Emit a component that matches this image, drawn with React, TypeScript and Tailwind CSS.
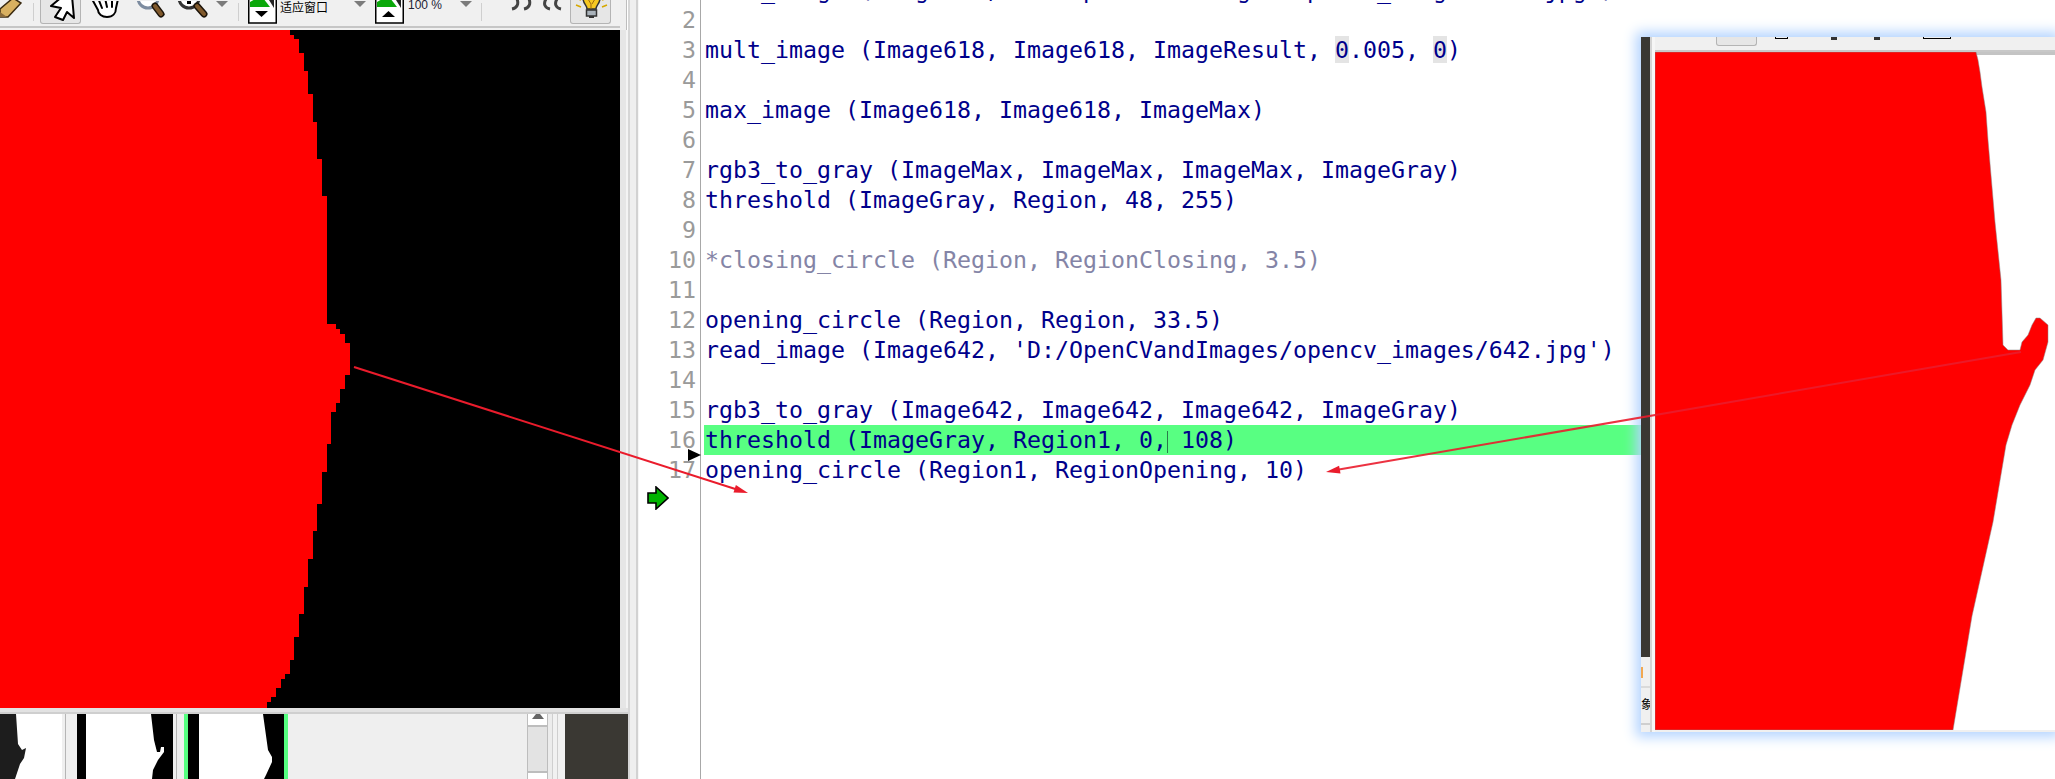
const codeLines: { n: number; text?: React.ReactNode; comment?: boolean; active?: boolean }[] = [
  { n: 1, text: "read_image (Image618, 'D:/OpenCVandImages/opencv_images/618.jpg')" },
  { n: 2 },
  {
    n: 3,
    text: (
      <>
        mult_image (Image618, Image618, ImageResult, <span className="bg-[#e4e4e4]">0</span>.005, <span className="bg-[#e4e4e4]">0</span>)
      </>
    ),
  },
  { n: 4 },
  { n: 5, text: "max_image (Image618, Image618, ImageMax)" },
  { n: 6 },
  { n: 7, text: "rgb3_to_gray (ImageMax, ImageMax, ImageMax, ImageGray)" },
  { n: 8, text: "threshold (ImageGray, Region, 48, 255)" },
  { n: 9 },
  { n: 10, text: "*closing_circle (Region, RegionClosing, 3.5)", comment: true },
  { n: 11 },
  { n: 12, text: "opening_circle (Region, Region, 33.5)" },
  { n: 13, text: "read_image (Image642, 'D:/OpenCVandImages/opencv_images/642.jpg')" },
  { n: 14 },
  { n: 15, text: "rgb3_to_gray (Image642, Image642, Image642, ImageGray)" },
  {
    n: 16,
    text: (
      <>
        threshold (ImageGray, Region1, 0,<span className="inline-block w-px h-[22px] -mr-px align-middle bg-[#2a7a4a]" /> 108)
      </>
    ),
    active: true,
  },
  { n: 17, text: "opening_circle (Region1, RegionOpening, 10)" },
];

type Pt = [number, number];

// walks an outline row by row so the edge comes out blocky like a zoomed image
const steppedPath = (pts: Pt[], block: number) => {
  const xAt = (y: number) => {
    for (let i = 0; i < pts.length - 1; i++) {
      const [x1, y1] = pts[i];
      const [x2, y2] = pts[i + 1];
      if (y >= y1 && y <= y2) return x1 + ((x2 - x1) * (y - y1)) / (y2 - y1 || 1);
    }
    return pts[pts.length - 1][0];
  };
  const top = pts[0][1];
  const bottom = pts[pts.length - 1][1];
  let d = `M0 ${top}`;
  for (let y = top; y < bottom; y += block) {
    const x = Math.round(xAt(y + block / 2) / block) * block;
    d += ` H${x} V${Math.min(y + block, bottom)}`;
  }
  return d + " H0 Z";
};

const leftOutline: Pt[] = [
  [286, 0], [296, 8], [303, 25], [312, 70], [325, 170], [328, 210], [328, 293], [335, 296], [341, 300], [346, 310],
  [349, 318], [349, 342], [346, 350], [340, 368], [334, 380], [308, 547], [291, 638], [277, 660], [265, 678],
];

const Caret = () => (
  <svg width="12" height="6" viewBox="0 0 12 6" className="shrink-0">
    <path d="M0 0H12L6 6Z" fill="#7b7b7b" />
  </svg>
);

const Sep = () => <div className="w-px h-[18px] bg-[#cfcfcf] shrink-0 mb-[3px]" />;

const PressedButton = ({ children }: { children: React.ReactNode }) => (
  <div className="w-[41px] h-[24px] shrink-0 rounded-b-[3px] border border-t-0 border-[#b4b4b4] bg-[#e6e6e6] overflow-hidden">
    {children}
  </div>
);

const FitIcon = ({ down }: { down?: boolean }) => (
  <svg width="29" height="24" viewBox="0 0 29 24" className="shrink-0">
    <rect x="0.75" y="-4" width="27.5" height="27" fill="#fff" stroke="#000" strokeWidth="1.5" />
    <path d="M2 7V2L9 -2H15L22 7Z" fill="#0aa80a" />
    <path d="M21 0H26V8Z" fill="#222" />
    <path d={down ? "M7 11H20L13.5 17Z" : "M7 17H20L13.5 11Z"} fill="#000" />
  </svg>
);

const Toolbar = () => (
  <div className="h-[30px] shrink-0 bg-[#f0f0f0] overflow-hidden flex">
    <div className="w-[620px] h-[28px] border-b-2 border-[#c6c6c6] flex items-end pb-[2px] overflow-hidden">
      <svg width="22" height="18" viewBox="0 0 22 18" className="shrink-0 mb-[6px]">
        <path d="M0 9L13 -2L21 3L8 17H0Z" fill="#d8b060" stroke="#3a2a10" strokeWidth="1.5" />
        <path d="M0 12L7 17H0Z" fill="#8a6a3a" />
      </svg>
      <div className="w-[11px] shrink-0" />
      <Sep />
      <div className="w-[6px] shrink-0" />
      <PressedButton>
        <svg width="41" height="24" viewBox="0 0 41 24">
          <path d="M22 -4L10 6L20 8L14 17L22 20L26 12L33 18L31 -4Z" fill="#fff" stroke="#000" strokeWidth="2" strokeLinejoin="round" />
        </svg>
      </PressedButton>
      <svg width="30" height="18" viewBox="0 0 30 18" className="ml-[8px] shrink-0 mb-[5px]">
        <path d="M3 -2L9 9C9 13 13 16 18 16C24 16 27 12 27 7L29 -2M9 -3L13 7M16 -3L18 6M23 -3L23 6" fill="#fff" stroke="#000" strokeWidth="2" strokeLinecap="round" />
      </svg>
      <svg width="32" height="18" viewBox="0 0 32 18" className="ml-[14px] shrink-0 mb-[5px]">
        <circle cx="15" cy="-3" r="10" fill="#fff" stroke="#7d8ca0" strokeWidth="3" />
        <path d="M22 5L28 13" stroke="#1c140a" strokeWidth="7" strokeLinecap="round" />
        <path d="M22 5L28 13" stroke="#80592c" strokeWidth="4" strokeLinecap="round" />
      </svg>
      <svg width="32" height="18" viewBox="0 0 32 18" className="ml-[11px] shrink-0 mb-[5px]">
        <circle cx="13" cy="-3" r="10" fill="#fff" stroke="#333" strokeWidth="3" />
        <path d="M13 -2V3" stroke="#000" strokeWidth="4" />
        <path d="M21 5L28 13" stroke="#1c140a" strokeWidth="7" strokeLinecap="round" />
        <path d="M21 5L28 13" stroke="#80592c" strokeWidth="4" strokeLinecap="round" />
      </svg>
      <div className="ml-[8px] mb-[17px] shrink-0"><Caret /></div>
      <div className="w-[10px] shrink-0" />
      <Sep />
      <div className="w-[9px] shrink-0" />
      <FitIcon down />
      <span className="ml-[3px] mb-[11px] w-[74px] shrink-0 text-[12px] leading-[12px] text-black font-['Noto_Sans_CJK_SC',sans-serif]">适应窗口</span>
      <div className="mb-[17px] shrink-0"><Caret /></div>
      <div className="w-[9px] shrink-0" />
      <FitIcon />
      <span className="ml-[4px] mb-[13px] w-[52px] shrink-0 text-[12px] leading-[12px] text-[#223] font-['Liberation_Sans',sans-serif]">100 %</span>
      <div className="mb-[17px] shrink-0"><Caret /></div>
      <div className="w-[9px] shrink-0" />
      <Sep />
      <svg width="54" height="14" viewBox="0 0 54 14" className="ml-[29px] shrink-0 mb-[12px]">
        <path d="M1 11C6 10 8 6 6 1M13 11C18 10 20 6 18 1M35 1C32 6 34 10 39 11M46 1C43 6 45 10 50 11" fill="none" stroke="#444" strokeWidth="3" />
      </svg>
      <div className="w-[5px] shrink-0" />
      <PressedButton>
        <svg width="41" height="24" viewBox="0 0 41 24">
          <path d="M12 -2C12 4 16 5 16 9H25C25 5 29 4 29 -2Z" fill="#f6c820" stroke="#333" strokeWidth="1.5" />
          <path d="M17 -1L20 4V9M24 -1L21 4" fill="none" stroke="#a06a10" strokeWidth="1" />
          <rect x="15.5" y="10" width="10" height="6" fill="#a9b2ba" stroke="#333" strokeWidth="1.5" />
          <path d="M18 17H23" stroke="#333" strokeWidth="2" />
          <path d="M5 5L10 7M36 5L31 7M7 -1L10 0M34 -1L31 0" stroke="#d6a800" strokeWidth="1.5" />
        </svg>
      </PressedButton>
    </div>
    <div className="w-[6px] bg-[#efefef] shrink-0" />
    <div className="w-px bg-[#bdbdbd] shrink-0" />
    <div className="w-px bg-white shrink-0" />
  </div>
);

const Thumbs = () => (
  <div className="h-[65px] shrink-0 flex bg-[#efefef]">
    <svg width="65" height="65" viewBox="0 0 65 65" className="shrink-0">
      <rect width="62" height="65" fill="#fff" />
      <path d="M0 0H16L18 30L22 36L26 34L24 44L20 50L15 65H0Z" fill="#1d1d1d" />
    </svg>
    <div className="w-px bg-[#b5b5b5] shrink-0" />
    <svg width="110" height="65" viewBox="0 0 110 65" className="shrink-0">
      <rect x="11" width="96" height="65" fill="#000" />
      <path d="M20 0H85L88 26L91 38L94 38L95 33L98 33L98 38L92 46L87 56L86 65H20Z" fill="#fff" />
    </svg>
    <div className="w-px bg-[#b5b5b5] shrink-0" />
    <svg width="350" height="65" viewBox="0 0 350 65" className="shrink-0">
      <rect x="7" width="104" height="65" fill="#000" />
      <rect x="7" width="4" height="65" fill="#55ff80" />
      <rect x="107" width="4" height="65" fill="#55ff80" />
      <path d="M22 0H86L91 36L95 43L95 48L89 61L87 65H22Z" fill="#fff" />
    </svg>
    <div className="w-[21px] shrink-0 border-x border-[#bdbdbd] flex flex-col bg-white">
      <div className="h-[11px] shrink-0 flex justify-center">
        <svg width="12" height="5" viewBox="0 0 12 5"><path d="M0 5L4 0H8L12 5Z" fill="#666" /></svg>
      </div>
      <div className="h-[48px] shrink-0 bg-[#e3e3e3] border-y-2 border-[#bdbdbd]" />
    </div>
    <div className="w-[17px] shrink-0 flex">
      <div className="w-[4px] bg-[#ececec]" />
      <div className="w-[1px] bg-[#cfcfcf]" />
      <div className="w-[4px] bg-[#f1f1f1]" />
      <div className="w-[1px] bg-[#cfcfcf]" />
      <div className="w-[7px] bg-[#f1f1f1]" />
    </div>
    <div className="w-[63px] shrink-0 bg-[#3a3833]" />
  </div>
);

const LeftPanel = () => (
  <div className="w-[628px] shrink-0 flex flex-col">
    <Toolbar />
    <div className="h-[678px] shrink-0 flex">
      <svg width="620" height="678" viewBox="0 0 620 678" shapeRendering="crispEdges" className="shrink-0">
        <rect width="620" height="678" fill="#000" />
        <path d={steppedPath(leftOutline, 4.6)} fill="#f00" />
      </svg>
      <div className="w-[6px] bg-[#e6e6e6] shrink-0" />
      <div className="w-[2px] bg-[#f4f4f4] shrink-0" />
    </div>
    <div className="h-[6px] shrink-0 bg-[#e2e2e2] border-b-2 border-[#cfcfcf]" />
    <Thumbs />
  </div>
);

const Splitter = () => (
  <div className="w-[11px] shrink-0 flex">
    <div className="w-[2px] bg-[#d6d6d6]" />
    <div className="w-[6px] bg-[#efefef]" />
    <div className="w-[2px] bg-[#d2d2d2]" />
    <div className="w-[1px] bg-[#f6f6f6]" />
  </div>
);

const Editor = () => (
  <div className="flex-1 min-w-0 bg-white relative overflow-hidden font-['DejaVu_Sans_Mono',monospace] text-[23.25px] leading-[30px]">
    <div className="-mt-[25px] flex flex-col">
      {codeLines.map((line) => (
        <div key={line.n} className="h-[30px] flex whitespace-pre">
          <div className="w-[57px] shrink-0 text-right text-[#9a9a9a]">{line.n}</div>
          <div className="w-[5px] shrink-0 border-r border-[#a8a8a8]" />
          <div className={`flex-1 pl-px ml-[3px] ${line.active ? "bg-[#58ff82]" : ""} ${line.comment ? "text-[#8484a6]" : "text-[#00008b]"}`}>
            {line.text}
          </div>
        </div>
      ))}
      <div className="w-[62px] h-[400px] border-r border-[#a8a8a8]" />
    </div>
    <svg width="13" height="12" viewBox="0 0 13 12" className="absolute left-[49px] top-[449px]">
      <path d="M0 0L13 6L0 12Z" fill="#000" />
    </svg>
    <svg width="22" height="24" viewBox="0 0 22 24" className="absolute left-[8px] top-[486px]">
      <path d="M1 7H9V1L21 12L9 23V17H1Z" fill="#00b400" stroke="#000" strokeWidth="1.6" />
    </svg>
  </div>
);

const windowOutline =
  "M0 0H321L323 8L325 20L327 35L331 60L333 88L340 170L346 228L348 293L353 298L365 298L367 290L373 283L377 273L381 266L385 266L393 273L393 290L388 308L380 318L375 333L365 353L357 373L351 393L338 470L317 564L298 678H0Z";

const FloatingWindow = () => (
  <div className="absolute left-[1641px] top-[37px] w-[414px] h-[695px] flex bg-[#f0f0f0] shadow-[0_0_12px_5px_#b4d4ff]">
    <div className="w-[9px] shrink-0 flex flex-col overflow-hidden">
      <div className="h-[620px] shrink-0 bg-[#3a3833]" />
      <div className="h-[31px] shrink-0 border-b-2 border-[#dadada] bg-[#f0f0f0]">
        <div className="w-[2px] h-[11px] mt-[10px] bg-[#f2a850]" />
      </div>
      <div className="h-[37px] shrink-0 border-b-2 border-[#cfcfcf] overflow-hidden pt-[10px] text-[12px] leading-[12px] text-black font-['Noto_Sans_CJK_SC',sans-serif]">象</div>
    </div>
    <div className="w-[2px] shrink-0 bg-[#d4d4d4]" />
    <div className="w-[3px] shrink-0 bg-[#f6f6f6]" />
    <div className="flex-1 min-w-0 flex flex-col">
      <div className="h-[15px] shrink-0 border-b-2 border-[#c8c8c8] flex items-start overflow-hidden">
        <div className="ml-[61px] w-[41px] h-[9px] rounded-b-[3px] border border-t-0 border-[#b4b4b4] bg-[#e6e6e6]" />
        <div className="ml-[18px] w-[13px] h-[2px] border border-t-0 border-black" />
        <div className="ml-[43px] w-[6px] h-[3px] bg-[#333]" />
        <div className="ml-[37px] w-[6px] h-[3px] bg-[#333]" />
        <div className="ml-[43px] w-[28px] h-[2px] border border-t-0 border-black" />
      </div>
      <svg width="400" height="678" viewBox="0 0 400 678" className="shrink-0 bg-white">
        <rect x="321" width="79" height="3" fill="#c4c4c4" />
        <path d={windowOutline} fill="#f00" stroke="#888" strokeOpacity="0.5" strokeWidth="1" />
      </svg>
    </div>
  </div>
);

const Annotations = () => (
  <svg width="2055" height="779" viewBox="0 0 2055 779" className="absolute left-0 top-0 pointer-events-none">
    <path d="M354 367L740 490.5" stroke="#ea1c2c" strokeWidth="2" />
    <path d="M748 493L733.5 492.5L735.9 484.9Z" fill="#ea1c2c" />
    <path d="M2021 352L1336 470" stroke="#ea1c2c" strokeWidth="2" strokeOpacity="0.9" />
    <path d="M1326 472L1340.5 473.5L1339.1 465.7Z" fill="#ea1c2c" />
  </svg>
);

const App = () => {
  return (
    <div className="relative w-[2055px] h-[779px] overflow-hidden bg-white flex">
      <LeftPanel />
      <Splitter />
      <Editor />
      <FloatingWindow />
      <Annotations />
    </div>
  );
};

export default App;
